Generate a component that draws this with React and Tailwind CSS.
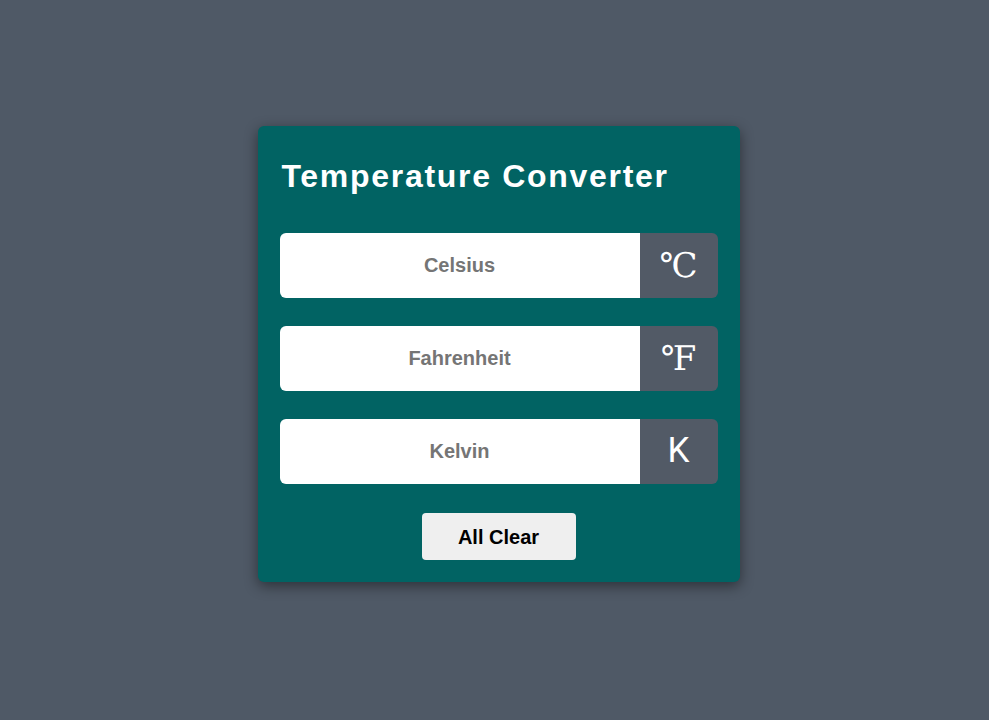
import React, { useState } from "react";

const units = [
  { name: "Celsius", sign: "℃", serif: true },
  { name: "Fahrenheit", sign: "℉", serif: true },
  { name: "Kelvin", sign: "K", serif: false },
];

const App = () => {
  const [values, setValues] = useState({ Celsius: "", Fahrenheit: "", Kelvin: "" });

  const clearAll = () => {
    setValues({ Celsius: "", Fahrenheit: "", Kelvin: "" });
  };

  return (
    <div className="min-h-screen bg-[#4f5966] flex justify-center pt-[126px] pl-[8px] [font-family:'Liberation_Sans',Arial,sans-serif]">
      <div className="w-[482px] h-[456px] bg-[#016363] rounded-md shadow-[0_4px_14px_rgba(0,0,0,0.45)] px-[22px] pt-[30px]">
        <h1 className="text-[32px] font-bold text-white tracking-[1.7px] leading-[40px] pl-[2px]">
          Temperature Converter
        </h1>
        <div className="mt-[37px] flex flex-col gap-[28px]">
          {units.map((u) => (
            <div key={u.name} className="flex h-[65px]">
              <input
                type="text"
                placeholder={u.name}
                value={values[u.name]}
                onChange={(e) => setValues({ ...values, [u.name]: e.target.value })}
                className="w-[360px] h-full bg-white rounded-l-md text-center text-[20px] font-bold text-[#757575] placeholder:text-[#757575] outline-none [font-family:'Liberation_Sans',Arial,sans-serif]"
              />
              {u.serif ? (
                <div className="flex-1 bg-[#525a66] rounded-r-md flex items-center justify-center text-white text-[34px] [font-family:'Liberation_Serif','DejaVu_Serif',serif]">
                  {u.sign}
                </div>
              ) : (
                <div className="flex-1 bg-[#525a66] rounded-r-md flex items-center justify-center text-white text-[35px] font-normal [font-family:Roboto,'Noto_Sans',sans-serif]">
                  {u.sign}
                </div>
              )}
            </div>
          ))}
        </div>
        <div className="flex justify-center mt-[29px]">
          <button
            onClick={clearAll}
            className="w-[154px] h-[47px] bg-[#efefef] rounded-sm text-[20px] font-bold text-black [font-family:'Liberation_Sans',Arial,sans-serif]"
          >
            All Clear
          </button>
        </div>
      </div>
    </div>
  );
};

export default App;
